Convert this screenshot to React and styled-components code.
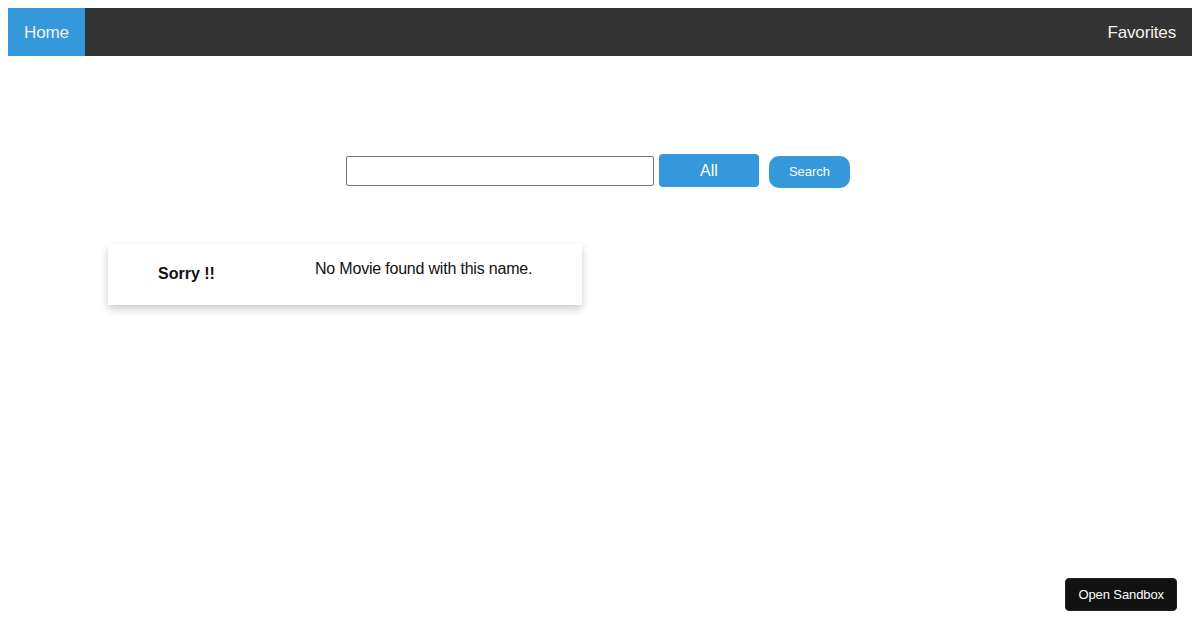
import React from "react";
import styled, { createGlobalStyle } from "styled-components";

const Global = createGlobalStyle`
  html, body { min-height: 100%; }
  body { margin: 8px; font-family: "Liberation Sans", Arial, sans-serif; background: #fff; color: #000; }
  * { box-sizing: border-box; }
`;

const Page = styled.div`
  min-height: 600px;
  padding-bottom: 20px;
`;

const Nav = styled.nav`
  display: flex;
  justify-content: space-between;
  align-items: stretch;
  height: 48px;
  background: #333333;
`;

const NavLink = styled.a`
  display: flex;
  align-items: center;
  padding: 1px 16px 0;
  font-size: 17px;
  letter-spacing: -0.15px;
  color: #f2f2f2;
  text-decoration: none;
  background: ${(p) => (p.$active ? "#3498db" : "transparent")};
`;

const SearchRow = styled.div`
  display: flex;
  justify-content: center;
  align-items: flex-start;
  margin-top: 98px;
  padding-right: 4px;
`;

const Input = styled.input`
  width: 308px;
  height: 30px;
  margin-top: 2px;
  border: 1px solid #767676;
  border-radius: 2px;
  padding: 1px 2px;
  font-size: 13px;
`;

const Button = styled.button`
  background: #3498db;
  color: #fff;
  border: none;
  font-family: "Liberation Sans", Arial, sans-serif;
  cursor: pointer;
  width: ${(p) => p.$w}px;
  height: ${(p) => p.$h}px;
  border-radius: ${(p) => p.$r}px;
  font-size: ${(p) => p.$fs}px;
  margin-left: ${(p) => p.$ml}px;
  margin-top: ${(p) => p.$mt}px;
  padding: 0 0 ${(p) => p.$pb || 0}px;
`;

const Card = styled.div`
  display: flex;
  width: 474px;
  height: 61px;
  margin: 56px 0 0 100px;
  background: #fff;
  box-shadow: 0 4px 8px 0 rgba(0, 0, 0, 0.2);
`;

const Title = styled.div`
  width: 207px;
  padding: 21px 0 0 50px;
  font-size: 16px;
  font-weight: bold;
  color: #111;
`;

const Message = styled.div`
  padding-top: 16px;
  font-size: 16px;
  letter-spacing: -0.2px;
  color: #111;
`;

const Sandbox = styled.a`
  position: fixed;
  right: 23px;
  bottom: 19px;
  background: #111;
  color: #fff;
  font-size: 13px;
  letter-spacing: -0.1px;
  border-radius: 4px;
  padding: 0 12px;
  height: 33px;
  display: flex;
  align-items: center;
  text-decoration: none;
  border: 1px solid #222;
`;

export default function App() {
  return (
    <Page>
      <Global />
      <Nav>
        <NavLink $active href="#">Home</NavLink>
        <NavLink href="#">Favorites</NavLink>
      </Nav>
      <SearchRow>
        <Input type="text" />
        <Button $w={100} $h={33} $r={4} $fs={16} $ml={5} $mt={0}>All</Button>
        <Button $w={81} $h={32} $r={10} $fs={13} $ml={10} $mt={2} $pb={2}>Search</Button>
      </SearchRow>
      <Card>
        <Title>Sorry !!</Title>
        <Message>No Movie found with this name.</Message>
      </Card>
      <Sandbox href="#">Open Sandbox</Sandbox>
    </Page>
  );
}
